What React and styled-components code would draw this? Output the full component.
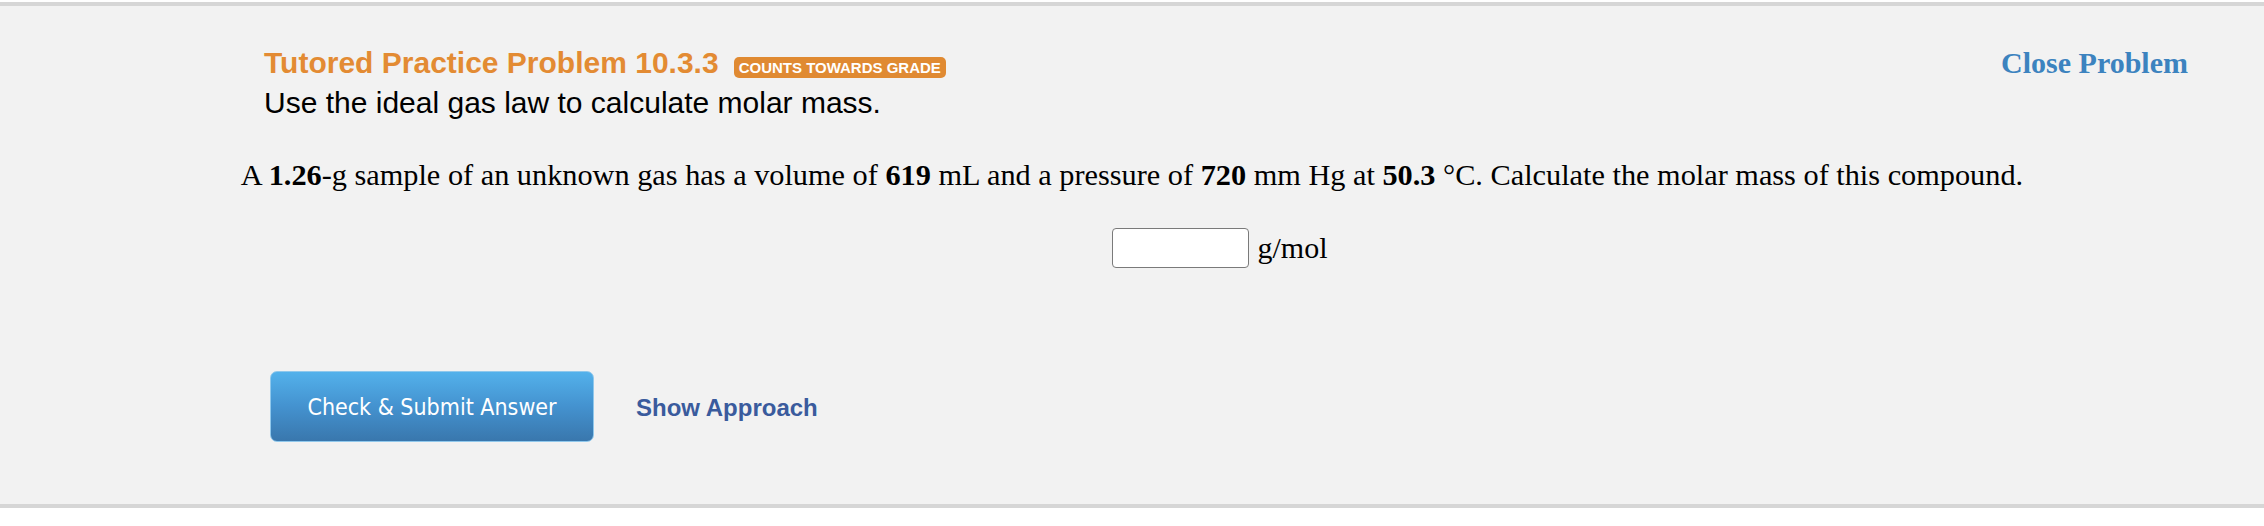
import React from 'react';
import styled, { createGlobalStyle } from 'styled-components';

const GlobalStyle = createGlobalStyle`
  html, body {
    margin: 0;
    padding: 0;
    background: #ffffff;
  }
`;

const Panel = styled.div`
  margin-top: 2px;
  height: 498px;
  box-sizing: content-box;
  background: #f2f2f2;
  border-top: 4px solid #d6d6d6;
  border-bottom: 4px solid #d6d6d6;
  display: flex;
  flex-direction: column;
`;

const Header = styled.div`
  display: flex;
  justify-content: space-between;
  align-items: flex-start;
  padding: 37px 76px 0 264px;
`;

const Heading = styled.div`
  display: flex;
  flex-direction: column;
`;

const TitleRow = styled.div`
  display: flex;
  align-items: baseline;
  gap: 15px;
`;

const Title = styled.h1`
  margin: 0;
  font-family: 'Liberation Sans', Arial, sans-serif;
  font-size: 30px;
  line-height: 40px;
  font-weight: 700;
  color: #e38b33;
`;

const Badge = styled.span`
  display: inline-block;
  padding: 0 5px;
  height: 21px;
  line-height: 22px;
  border-radius: 5px;
  background: #e08a32;
  color: #ffffff;
  font-family: 'Liberation Sans', Arial, sans-serif;
  font-size: 15px;
  font-weight: 700;
`;

const SubTitle = styled.p`
  margin: 0;
  font-family: 'Liberation Sans', Arial, sans-serif;
  font-size: 30px;
  line-height: 40px;
  color: #000000;
`;

const CloseLink = styled.a`
  margin-top: 0;
  font-family: 'Liberation Serif', 'Times New Roman', serif;
  font-size: 30px;
  line-height: 40px;
  font-weight: 700;
  color: #3c83bf;
  text-decoration: none;
  cursor: pointer;
`;

const Question = styled.p`
  margin: 35px 0 0;
  text-align: center;
  font-family: 'Liberation Serif', 'Times New Roman', serif;
  font-size: 30.3px;
  line-height: 34px;
  color: #000000;

  b {
    font-weight: 700;
  }
`;

const AnswerRow = styled.div`
  margin-top: 36px;
  display: flex;
  justify-content: center;
  align-items: center;
  gap: 8px;
  padding-left: 176px;
`;

const AnswerInput = styled.input`
  width: 137px;
  height: 40px;
  box-sizing: border-box;
  border: 1.5px solid #7a7a7a;
  border-radius: 4px;
  background: #ffffff;
  outline: none;
`;

const Unit = styled.span`
  font-family: 'Liberation Serif', 'Times New Roman', serif;
  font-size: 30px;
  line-height: 40px;
  color: #000000;
`;

const Actions = styled.div`
  margin-top: 103px;
  padding-left: 270px;
  display: flex;
  align-items: center;
  gap: 42px;
`;

const SubmitButton = styled.button`
  width: 324px;
  height: 71px;
  border: 1px solid #90c8ec;
  border-radius: 7px;
  background: linear-gradient(to bottom, #53b1eb 0%, #4492cf 50%, #3977ad 100%);
  color: #ffffff;
  font-family: 'DejaVu Sans Condensed', 'DejaVu Sans', Verdana, sans-serif;
  font-size: 23px;
  cursor: pointer;
`;

const ApproachLink = styled.a`
  font-family: 'Liberation Sans', Arial, sans-serif;
  font-size: 24px;
  font-weight: 700;
  color: #3a5b9d;
  text-decoration: none;
  cursor: pointer;
  margin-top: 3px;
`;

const App = () => {
  return (
    <>
      <GlobalStyle />
      <Panel>
        <Header>
          <Heading>
            <TitleRow>
              <Title>Tutored Practice Problem 10.3.3</Title>
              <Badge>COUNTS TOWARDS GRADE</Badge>
            </TitleRow>
            <SubTitle>Use the ideal gas law to calculate molar mass.</SubTitle>
          </Heading>
          <CloseLink>Close Problem</CloseLink>
        </Header>
        <Question>
          A <b>1.26</b>-g sample of an unknown gas has a volume of <b>619</b> mL and a pressure of{' '}
          <b>720</b> mm Hg at <b>50.3</b> °C. Calculate the molar mass of this compound.
        </Question>
        <AnswerRow>
          <AnswerInput type="text" />
          <Unit>g/mol</Unit>
        </AnswerRow>
        <Actions>
          <SubmitButton>Check &amp; Submit Answer</SubmitButton>
          <ApproachLink>Show Approach</ApproachLink>
        </Actions>
      </Panel>
    </>
  );
};

export default App;
